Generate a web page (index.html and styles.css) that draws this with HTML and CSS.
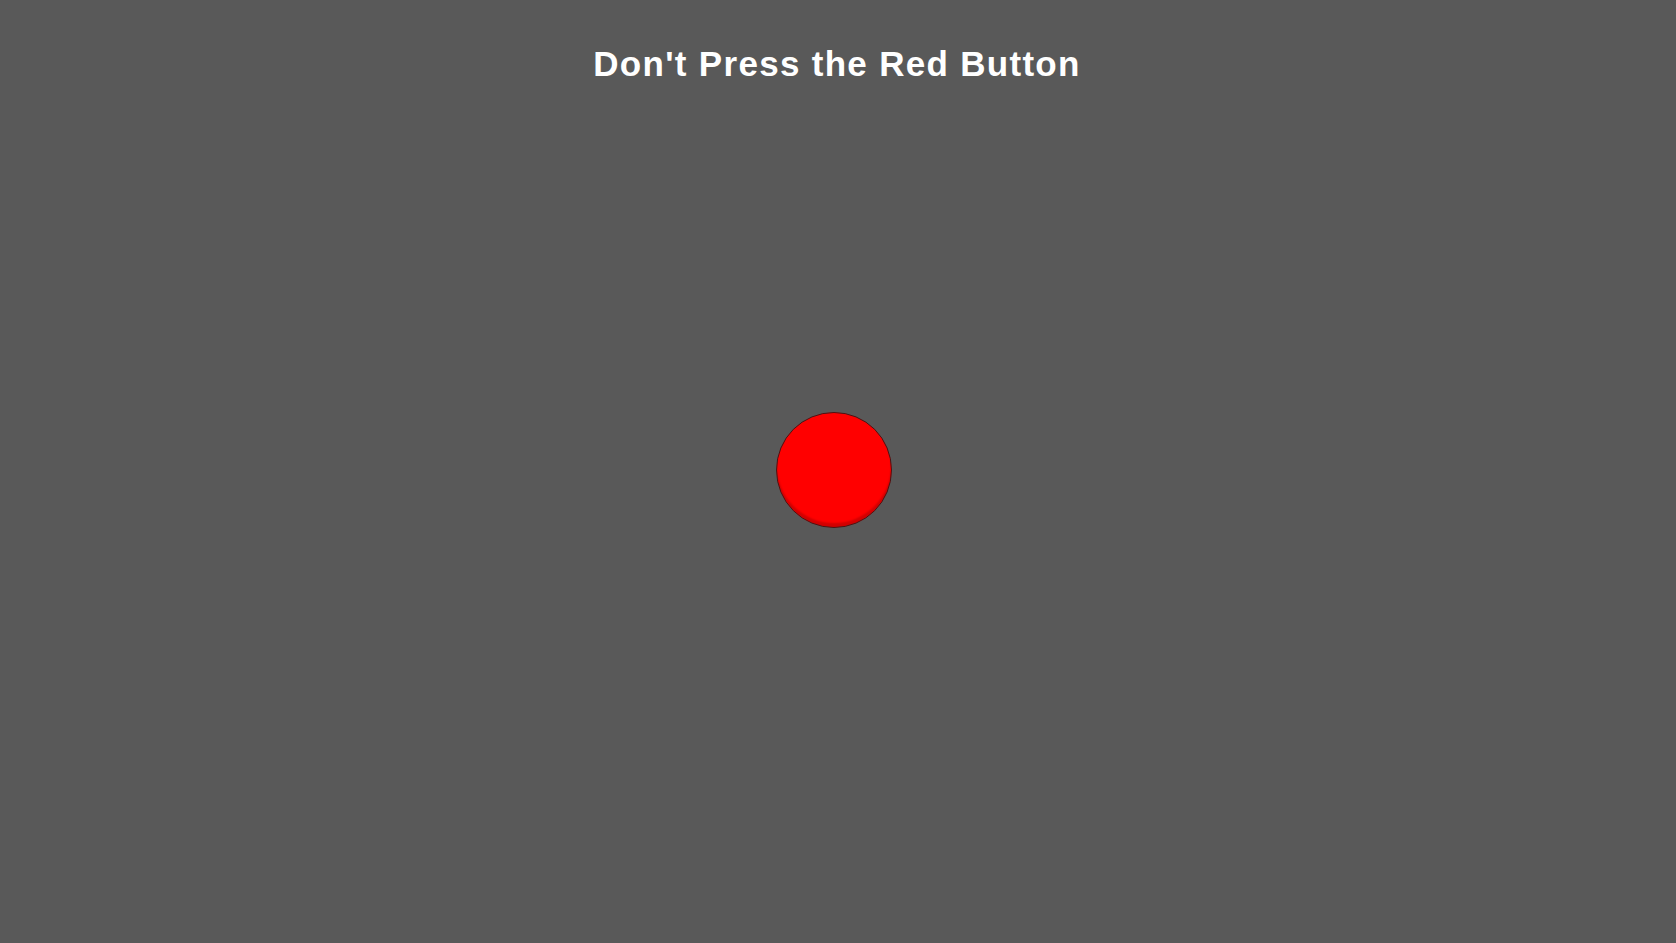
FILE: index.html
```html
<!DOCTYPE html>
<html lang="en">
<head>
<meta charset="utf-8">
<title>Don't Press the Red Button</title>
<link rel="stylesheet" href="styles.css">
</head>
<body>
  <header class="title-bar">
    <h1 class="title">Don't Press the Red Button</h1>
  </header>
  <main class="stage">
    <button class="red-button" type="button" aria-label="Red button"></button>
  </main>
</body>
</html>
```

FILE: styles.css
```css
html, body {
  margin: 0;
  padding: 0;
  height: 100%;
}

body {
  background: #595959;
  font-family: "Liberation Sans", Arial, sans-serif;
  color: #ffffff;
  overflow: hidden;
}

.title-bar {
  padding-top: 44px;
  padding-right: 2px;
  text-align: center;
}

.title {
  margin: 0;
  font-size: 35px;
  line-height: 40px;
  font-weight: bold;
  letter-spacing: 1.3px;
}

.stage {
  display: flex;
  justify-content: center;
  padding-top: 328px;
  padding-right: 8px;
}

.red-button {
  width: 116px;
  height: 116px;
  padding: 0;
  border: 1px solid #4a1414;
  border-radius: 50%;
  background: #ff0000;
  box-shadow: inset 0 -4px 2px rgba(0, 0, 0, 0.18);
  cursor: pointer;
}
```
